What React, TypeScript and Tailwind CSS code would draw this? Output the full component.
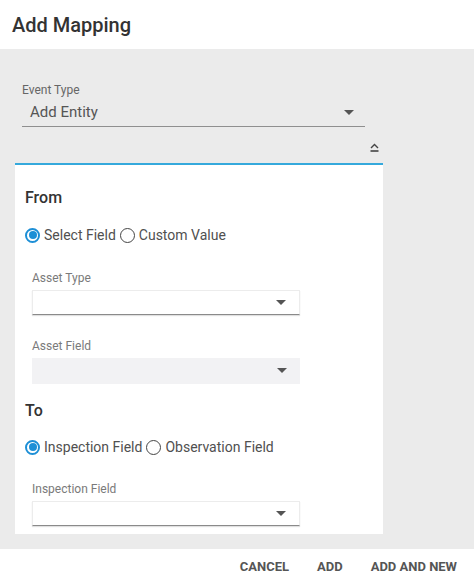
import React from "react"

function Caret() {
  return (
    <svg width="10" height="5" viewBox="0 0 10 5" className="text-[#555]">
      <path d="M0 0 L10 0 L5 5 Z" fill="currentColor" />
    </svg>
  )
}

function Radio({ checked, label }: { checked?: boolean; label: string }) {
  return (
    <label className="flex items-center gap-[4px]">
      {checked ? (
        <span className="flex h-[15px] w-[15px] items-center justify-center rounded-full border-2 border-[#1d8fd6]">
          <span className="h-[8px] w-[8px] rounded-full bg-[#1d8fd6]" />
        </span>
      ) : (
        <span className="h-[15px] w-[15px] rounded-full border-[1.5px] border-[#444]" />
      )}
      <span className="text-[14px] text-[#505050]">{label}</span>
    </label>
  )
}

function FieldSelect({ label, disabled }: { label: string; disabled?: boolean }) {
  return (
    <div className="ml-[7px] w-[268px]">
      <div className="text-[12px] leading-[16px] text-[#7a7a7a]">{label}</div>
      <div
        className={
          disabled
            ? "mt-[4px] flex h-[26px] items-center justify-end bg-[#f2f2f4] pr-[13px]"
            : "mt-[4px] flex h-[25px] items-center justify-end border border-[#ececec] border-b-[#8a8a8a] bg-white pr-[13px] shadow-[0_1px_1px_rgba(0,0,0,0.12)]"
        }
      >
        <Caret />
      </div>
    </div>
  )
}

export default function App() {
  return (
    <div className="flex h-[579px] w-[474px] flex-col bg-white font-['Roboto',sans-serif]">
      <div className="flex h-[49px] items-center px-[12px] text-[20px] font-medium text-[#333]">
        Add Mapping
      </div>

      <div className="h-[500px] bg-[#ebebeb] pt-[33px]">
        <div className="ml-[22px] w-[343px]">
          <div className="text-[12px] leading-[16px] text-[#666]">Event Type</div>
          <div className="mt-[1px] flex h-[28px] items-center justify-between border-b border-[#8f8f8f] pl-[8px] pr-[11px]">
            <span className="text-[15px] text-[#555]">Add Entity</span>
            <Caret />
          </div>
        </div>

        <div className="ml-[15px] w-[368px]">
          <div className="flex h-[36px] items-center justify-end pr-[3px] pt-[4px]">
            <svg width="11" height="11" viewBox="0 0 11 11" className="text-[#444]">
              <path d="M2 6 L5.5 2.5 L9 6" fill="none" stroke="currentColor" strokeWidth="1.4" />
              <path d="M1.5 9 L9.5 9" stroke="currentColor" strokeWidth="1.6" />
            </svg>
          </div>
          <div className="h-[1.5px] bg-[#35a9dc]" />
          <div className="bg-white pb-[8px] pl-[10px] pt-[22px]">
            <div className="text-[16px] font-medium leading-[22px] text-[#333]">From</div>
            <div className="mt-[16px] flex items-center gap-[4px]">
              <Radio checked label="Select Field" />
              <Radio label="Custom Value" />
            </div>
            <div className="mt-[24px] flex flex-col gap-[23px]">
              <FieldSelect label="Asset Type" />
              <FieldSelect label="Asset Field" disabled />
            </div>
            <div className="mt-[16px] text-[16px] font-medium leading-[22px] text-[#333]">To</div>
            <div className="mt-[15px] flex items-center gap-[4px]">
              <Radio checked label="Inspection Field" />
              <Radio label="Observation Field" />
            </div>
            <div className="mt-[23px]">
              <FieldSelect label="Inspection Field" />
            </div>
          </div>
        </div>
      </div>

      <div className="flex h-[30px] items-center justify-end gap-[28px] pr-[17px] pt-[5px] text-[13px] font-bold text-[#555]">
        <button>CANCEL</button>
        <button>ADD</button>
        <button>ADD AND NEW</button>
      </div>
    </div>
  )
}
